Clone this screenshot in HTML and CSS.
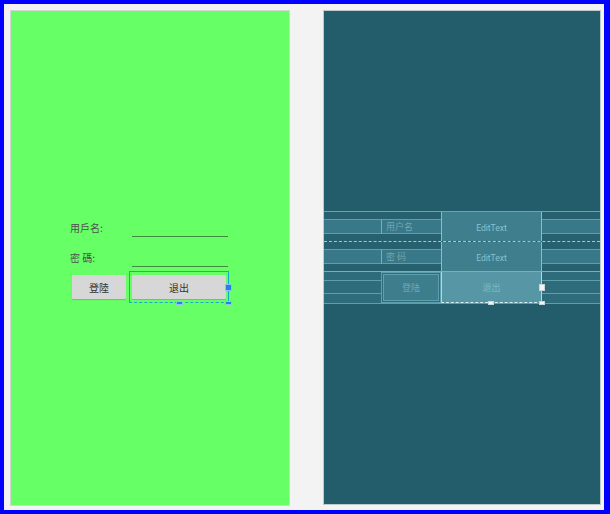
FILE: index.html
```html
<!DOCTYPE html>
<html lang="zh">
<head>
<meta charset="utf-8">
<title>Layout preview</title>
<link rel="stylesheet" href="styles.css">
</head>
<body>
<div class="stage">
  <section class="panel-design">
    <div class="form">
      <div class="row row-a">
        <div class="label">用戶名:</div>
        <div class="field"><span class="underline"></span></div>
      </div>
      <div class="row row-b">
        <div class="label">密&nbsp;碼:</div>
        <div class="field"><span class="underline"></span></div>
      </div>
      <div class="row row-c">
        <div class="btn-cell"><div class="btn">登陸</div></div>
        <div class="btn-cell selected">
          <div class="btn">退出</div>
          <span class="handle handle-right"></span>
          <span class="handle handle-bottom"></span>
          <span class="handle handle-corner"></span>
        </div>
      </div>
    </div>
  </section>

  <section class="panel-blueprint">
    <div class="bp-form">
      <div class="bp-row bp-row-dashed">
        <div class="bp-cell"><div class="bp-strip"></div></div>
        <div class="bp-cell"><div class="bp-strip bp-strip-div">用户名</div></div>
        <div class="bp-edit">EditText</div>
        <div class="bp-cell"><div class="bp-strip"></div></div>
      </div>
      <div class="bp-row">
        <div class="bp-cell"><div class="bp-strip"></div></div>
        <div class="bp-cell"><div class="bp-strip bp-strip-div">密&nbsp;码</div></div>
        <div class="bp-edit">EditText</div>
        <div class="bp-cell"><div class="bp-strip"></div></div>
      </div>
      <div class="bp-row bp-row-last">
        <div class="bp-stack"><span></span><span></span><span></span></div>
        <div class="bp-button"><div class="bp-button-inner">登陆</div></div>
        <div class="bp-exit">
          退出
          <span class="bp-handle bp-handle-right"></span>
          <span class="bp-handle bp-handle-bottom"></span>
          <span class="bp-handle bp-handle-corner"></span>
        </div>
        <div class="bp-stack"><span></span><span></span><span></span></div>
      </div>
    </div>
  </section>
</div>
</body>
</html>
```

FILE: styles.css
```css
* { box-sizing: border-box; }
html, body { margin: 0; padding: 0; }
body {
  width: 610px;
  height: 514px;
  overflow: hidden;
  border-style: solid;
  border-color: #0000ff;
  border-width: 4px 6px 4px 4px;
  background: #f3f3f3;
  font-family: "Noto Sans CJK SC", "Noto Sans", sans-serif;
}
.stage {
  display: flex;
  gap: 35px;
  padding: 7px 0 0 7px;
}

/* ---------- design panel ---------- */
.panel-design {
  width: 278px;
  height: 494px;
  background: #66ff66;
  box-shadow: 0 0 0 1px #d2d8d2;
}
.form {
  margin-top: 200px;
  padding-left: 57px;
}
.row {
  display: grid;
  grid-template-columns: 60px 101px;
}
.row-a, .row-b { height: 30px; }
.row-c { height: 32px; }
.label {
  display: flex;
  align-items: center;
  padding: 2px 0 0 2px;
  font-size: 10px;
  color: #505050;
}
.field { display: flex; flex-direction: column; }
.underline {
  display: block;
  margin: 25px 1px 0 4px;
  height: 1px;
  background: #3f8a3f;
}
.btn-cell {
  padding: 4px 2px 4px 4px;
}
.btn {
  height: 24px;
  display: flex;
  align-items: center;
  justify-content: center;
  background: #d7d7d7;
  border-radius: 1px;
  box-shadow: 0 1px 1px rgba(0,0,0,0.18);
  font-size: 10px;
  color: #333;
}
.selected {
  position: relative;
  margin-left: 1px;
  padding: 3px 2px 3px 2px;
  border: 1px solid #17a9c6;
  border-bottom-style: dashed;
}
.handle {
  position: absolute;
  width: 7px;
  height: 7px;
  background: #2480e6;
  border: 1px solid #8fc2f2;
}
.handle-right { right: -4px; top: 12px; }
.handle-bottom { left: 46px; bottom: -3px; height: 4px; }
.handle-corner { right: -4px; bottom: -3px; height: 4px; }

/* ---------- blueprint panel ---------- */
.panel-blueprint {
  width: 276px;
  height: 493px;
  background: #235c6b;
  box-shadow: 0 0 0 1px #bfcacc;
}
.bp-form {
  margin-top: 200px;
  border-top: 1px solid #5fa6b6;
}
.bp-row {
  display: grid;
  grid-template-columns: 57px 60px 101px 58px;
  height: 30px;
  border-bottom: 1px solid #6db3c2;
}
.bp-row-dashed { border-bottom: 1px dashed #8fd0dd; }
.bp-row-last { height: 32px; border-bottom: 1px solid #5d9fae; }
.bp-cell {
  display: flex;
  align-items: center;
  background: #27606f;
}
.bp-strip {
  width: 100%;
  height: 15px;
  background: #387888;
  border-top: 1px solid #5e9fae;
  border-bottom: 1px solid #5e9fae;
  font-size: 9px;
  line-height: 13px;
  color: #6fa7b2;
  padding-left: 4px;
}
.bp-strip-div { border-left: 1px solid #6eb2c0; }
.bp-edit {
  display: flex;
  align-items: center;
  justify-content: center;
  padding-top: 3px;
  background: #3e7e8d;
  border-left: 1px solid #7cc3d1;
  border-right: 1px solid #7cc3d1;
  font-family: Roboto, "Noto Sans", sans-serif;
  font-size: 8.5px;
  color: #8dc1cc;
}
.bp-stack {
  display: flex;
  flex-direction: column;
  background: #27606f;
}
.bp-stack span {
  display: block;
  border-bottom: 1px solid #5e9fae;
  background: #2f6c7b;
}
.bp-stack span:nth-child(1) { height: 9px; }
.bp-stack span:nth-child(2) { height: 13px; }
.bp-stack span:nth-child(3) { height: 9px; border-bottom: none; }
.bp-button {
  padding: 1px;
  border: 1px solid #5e9fae;
  background: #306d7c;
}
.bp-button-inner {
  height: 100%;
  display: flex;
  align-items: center;
  justify-content: center;
  border: 1px solid #5e9fae;
  background: #3d7d8c;
  font-size: 9px;
  color: #6ea9b4;
}
.bp-exit {
  position: relative;
  display: flex;
  align-items: center;
  justify-content: center;
  background: #5797a5;
  border-left: 1px solid #a6dbe5;
  border-right: 1px solid #a6dbe5;
  border-bottom: 1px dashed #d8eef2;
  font-size: 9px;
  color: #7db7c2;
}
.bp-handle {
  position: absolute;
  width: 6px;
  height: 6px;
  background: #f4f4f4;
  border: 1px solid #c9d5d8;
}
.bp-handle-right { right: -4px; top: 12px; height: 7px; }
.bp-handle-bottom { left: 46px; bottom: -3px; height: 4px; }
.bp-handle-corner { right: -4px; bottom: -3px; height: 4px; }
```
